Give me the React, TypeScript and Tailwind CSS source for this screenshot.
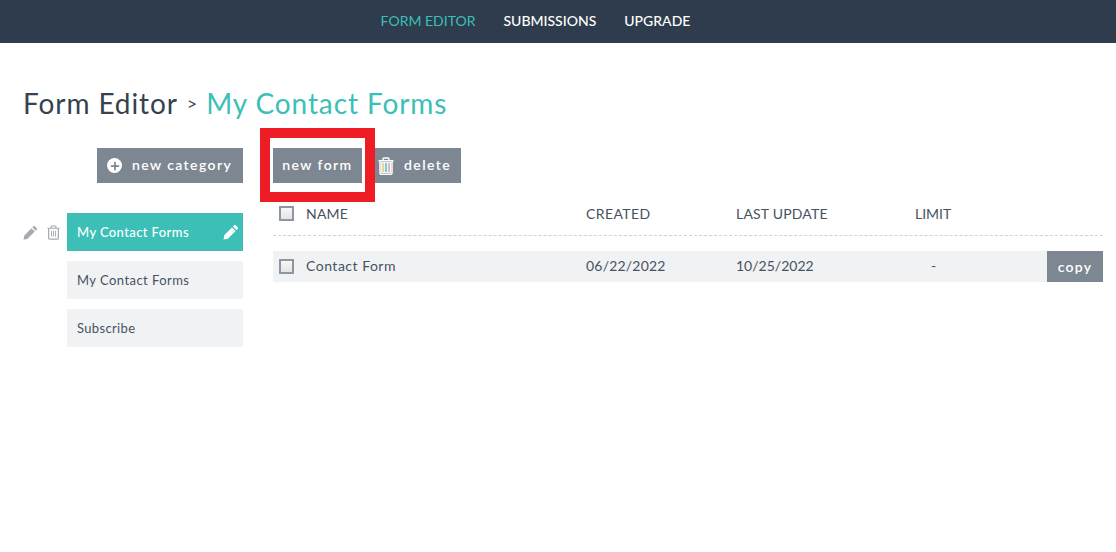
import { Plus } from "lucide-react";

const font = { fontFamily: "Lato, sans-serif" };

function Pencil({ className }: { className: string }) {
  return (
    <svg viewBox="0 0 16 16" className={className} fill="currentColor">
      <path d="M11.2 1.2a1 1 0 0 1 1.4 0l2.2 2.2a1 1 0 0 1 0 1.4l-1.3 1.3-3.6-3.6zM9 3.4l3.6 3.6-7.7 7.7-4.4.9.9-4.5z" />
    </svg>
  );
}

function Trash({ className, bars }: { className: string; bars?: boolean }) {
  return (
    <svg viewBox="0 0 16 18" className={className} fill="none" stroke="currentColor">
      <path d="M0.5 3.8h15M5 3.8V2a1 1 0 0 1 1-1h4a1 1 0 0 1 1 1v1.8" strokeWidth="1.4" />
      <path d="M2 3.8v12.2a1.2 1.2 0 0 0 1.2 1.2h9.6a1.2 1.2 0 0 0 1.2-1.2V3.8" strokeWidth="1.5" />
      {bars ? (
        <>
          <path d="M3 5h10v11H3z" fill="#f4f5f6" stroke="none" />
          <path d="M5 6v9" stroke="#e8cf86" strokeWidth="1.6" />
          <path d="M8 6v9" stroke="#5cc6c0" strokeWidth="1.6" />
          <path d="M11 6v9" stroke="#e2aaa8" strokeWidth="1.6" />
        </>
      ) : (
        <path d="M5.5 7v7M8 7v7M10.5 7v7" strokeWidth="1.2" />
      )}
    </svg>
  );
}

function Checkbox() {
  return (
    <span className="block h-[15px] w-[15px] border-2 border-[#8e96a3] bg-gradient-to-b from-[#f7f7f7] to-[#e4e4e4]" />
  );
}

export default function App() {
  return (
    <div className="relative min-h-[552px] bg-white text-[#465261]" style={font}>
      <nav className="flex h-[43px] items-center justify-center gap-[28px] bg-[#2f3c4e] pr-[45px] pb-[2px] text-[14px]">
        <a className="text-[#3bbfb7]">FORM EDITOR</a>
        <a className="font-medium text-white">SUBMISSIONS</a>
        <a className="font-medium text-white">UPGRADE</a>
      </nav>

      <h1 className="mt-[40px] ml-[23px] flex h-[40px] items-center text-[28px] leading-[40px] tracking-[0.9px] text-[#35424f]">
        Form Editor
        <span className="mr-[8px] ml-[9px] text-[18px]">&gt;</span>
        <span className="text-[#3bbfb7]">My Contact Forms</span>
      </h1>

      <div className="mt-[25px] flex">
        <aside className="flex w-[243px] flex-col items-end">
          <button className="flex h-[35px] w-[146px] items-center gap-[10px] bg-[#7d8792] pb-[2px] pl-[10px] text-[14px] font-semibold tracking-[1.4px] text-white">
            <span className="mt-[2px] flex h-[15px] w-[15px] items-center justify-center rounded-full bg-white">
              <Plus size={12} strokeWidth={3.5} className="text-[#7d8792]" />
            </span>
            new category
          </button>

          <div className="mt-[30px] flex items-center gap-[6px]">
            <Pencil className="h-[15px] w-[15px] -translate-x-[1px] text-[#a6abb2]" />
            <Trash className="ml-[2px] h-[15px] w-[13px] text-[#a6abb2]" />
            <div className="ml-[1px] flex h-[38px] w-[176px] items-center justify-between bg-[#3bbfb7] pr-[4px] pl-[10px] text-[13px] font-medium tracking-[0.4px] text-white">
              <span className="mt-[1px]">My Contact Forms</span>
              <Pencil className="h-[16px] w-[16px] text-white" />
            </div>
          </div>
          <div className="mt-[10px] flex h-[38px] w-[176px] items-center bg-[#f1f2f4] pt-[2px] pl-[10px] text-[13px] tracking-[0.45px]">
            My Contact Forms
          </div>
          <div className="mt-[10px] flex h-[38px] w-[176px] items-center bg-[#f1f2f4] pt-[2px] pl-[10px] text-[13px] tracking-[0.35px]">
            Subscribe
          </div>
        </aside>

        <main className="ml-[30px] w-[830px]">
          <div className="flex h-[35px]">
            <button className="h-[35px] w-[89px] bg-[#7d8792] pb-[2px] text-[14px] font-semibold tracking-[1.4px] text-white">
              new form
            </button>
            <button className="ml-[4px] flex h-[35px] w-[95px] items-center gap-[10px] bg-[#7d8792] pb-[2px] pl-[12px] text-[14px] font-semibold tracking-[1.4px] text-white">
              <Trash bars className="mt-[2px] h-[18px] w-[16px] text-white" />
              delete
            </button>
          </div>

          <div className="mt-[21px] flex h-[32px] items-start border-b border-dashed border-[#cfd2d6] text-[14px] leading-[20px]">
            <span className="mt-[2px] w-[33px] pl-[6px]">
              <Checkbox />
            </span>
            <span className="w-[280px] tracking-[0.2px]">NAME</span>
            <span className="w-[150px] tracking-[0.4px]">CREATED</span>
            <span className="w-[179px] tracking-[0.2px]">LAST UPDATE</span>
            <span>LIMIT</span>
          </div>

          <div className="mt-[15px] flex h-[31px] items-center bg-[#f1f2f4] text-[14px]">
            <span className="w-[33px] pl-[6px]">
              <Checkbox />
            </span>
            <span className="w-[280px] pb-[2px] tracking-[0.5px]">Contact Form</span>
            <span className="w-[150px] pb-[2px] tracking-[0.2px]">06/22/2022</span>
            <span className="w-[195px] pb-[2px]">10/25/2022</span>
            <span className="w-[116px] pb-[2px]">-</span>
            <button className="ml-auto h-[31px] w-[56px] bg-[#7d8792] pb-[1px] text-[14px] font-semibold tracking-[1.2px] text-white">
              copy
            </button>
          </div>
        </main>
      </div>

      {/* annotation box drawn over the screenshot */}
      <div className="absolute top-[128px] left-[260px] h-[74px] w-[115px] border-[10px] border-[#ee1c25]" />
    </div>
  );
}
